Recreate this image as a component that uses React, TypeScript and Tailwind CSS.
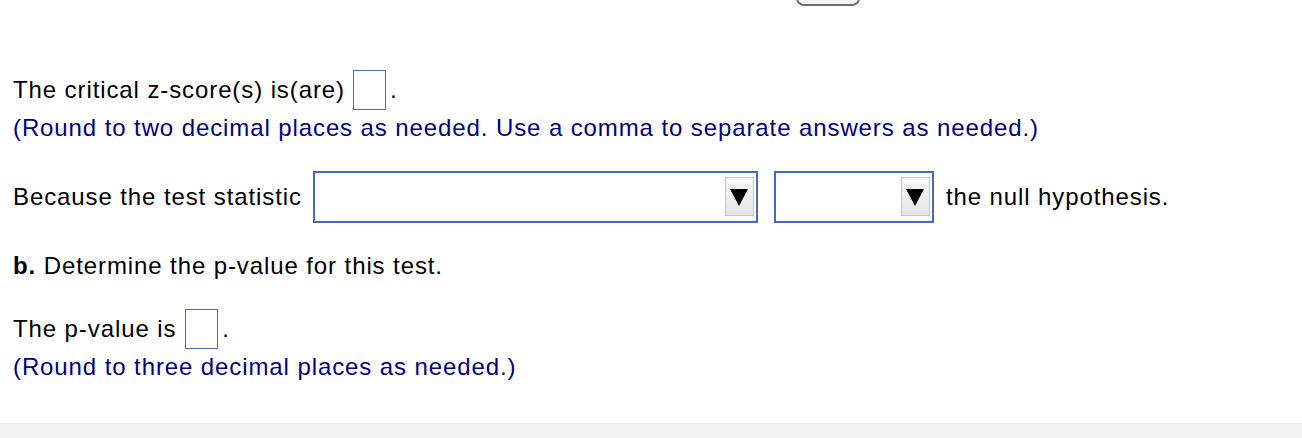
import React from "react";

const AnswerBox = () => (
    <span className="inline-block w-[33px] h-[40px] border-[1.5px] border-[#4a6cc4] bg-white" />
);

const Dropdown = ({ width }: { width: string }) => (
    <div className={`${width} h-[52px] border-2 border-[#4468c6] bg-white flex items-start justify-end pt-[4px] pr-[2px]`}>
        <div className="w-[29px] h-[39px] border border-[#c6c6c6] bg-gradient-to-b from-[#f7f7f7] to-[#e4e4e4] flex items-center justify-center">
            <svg width="18" height="18" viewBox="0 0 18 18">
                <polygon points="0,1 18,1 9,18" fill="#000" />
            </svg>
        </div>
    </div>
);

export default function App() {
    return (
        <div
            className="w-[1302px] h-[438px] bg-white overflow-hidden flex flex-col text-[24px] tracking-[0.9px] leading-[26px] text-black"
            style={{ fontFamily: '"Liberation Sans", Arial, Helvetica, sans-serif' }}
        >
            {/* top button peeking in */}
            <div className="ml-[796px] w-[64px] h-[30px] -mt-[24px] rounded-lg border-2 border-[#667080] bg-[#f3f4f6]" />

            <div className="px-[13px] mt-[64px] flex flex-col">
                <div className="flex items-center h-[40px]">
                    <span>The critical z-score(s) is(are)</span>
                    <span className="ml-[8px] flex"><AnswerBox /></span>
                    <span className="ml-[4px]">.</span>
                </div>
                <div className="mt-[5px] text-[#000080]">
                    (Round to two decimal places as needed. Use a comma to separate answers as needed.)
                </div>

                <div className="mt-[30px] flex items-center h-[52px]">
                    <span>Because the test statistic</span>
                    <span className="ml-[11px]"><Dropdown width="w-[445px]" /></span>
                    <span className="ml-[16px]"><Dropdown width="w-[160px]" /></span>
                    <span className="ml-[12px]">the null hypothesis.</span>
                </div>

                <div className="mt-[30px]">
                    <span className="font-bold">b.</span> Determine the p-value for this test.
                </div>

                <div className="mt-[30px] flex items-center h-[40px]">
                    <span>The p-value is</span>
                    <span className="ml-[9px] flex"><AnswerBox /></span>
                    <span className="ml-[4px]">.</span>
                </div>
                <div className="mt-[5px] text-[#000080]">(Round to three decimal places as needed.)</div>
            </div>

            <div className="mt-auto h-[15px] bg-[#f2f2f2] border-t border-[#ececec]" />
        </div>
    );
}
